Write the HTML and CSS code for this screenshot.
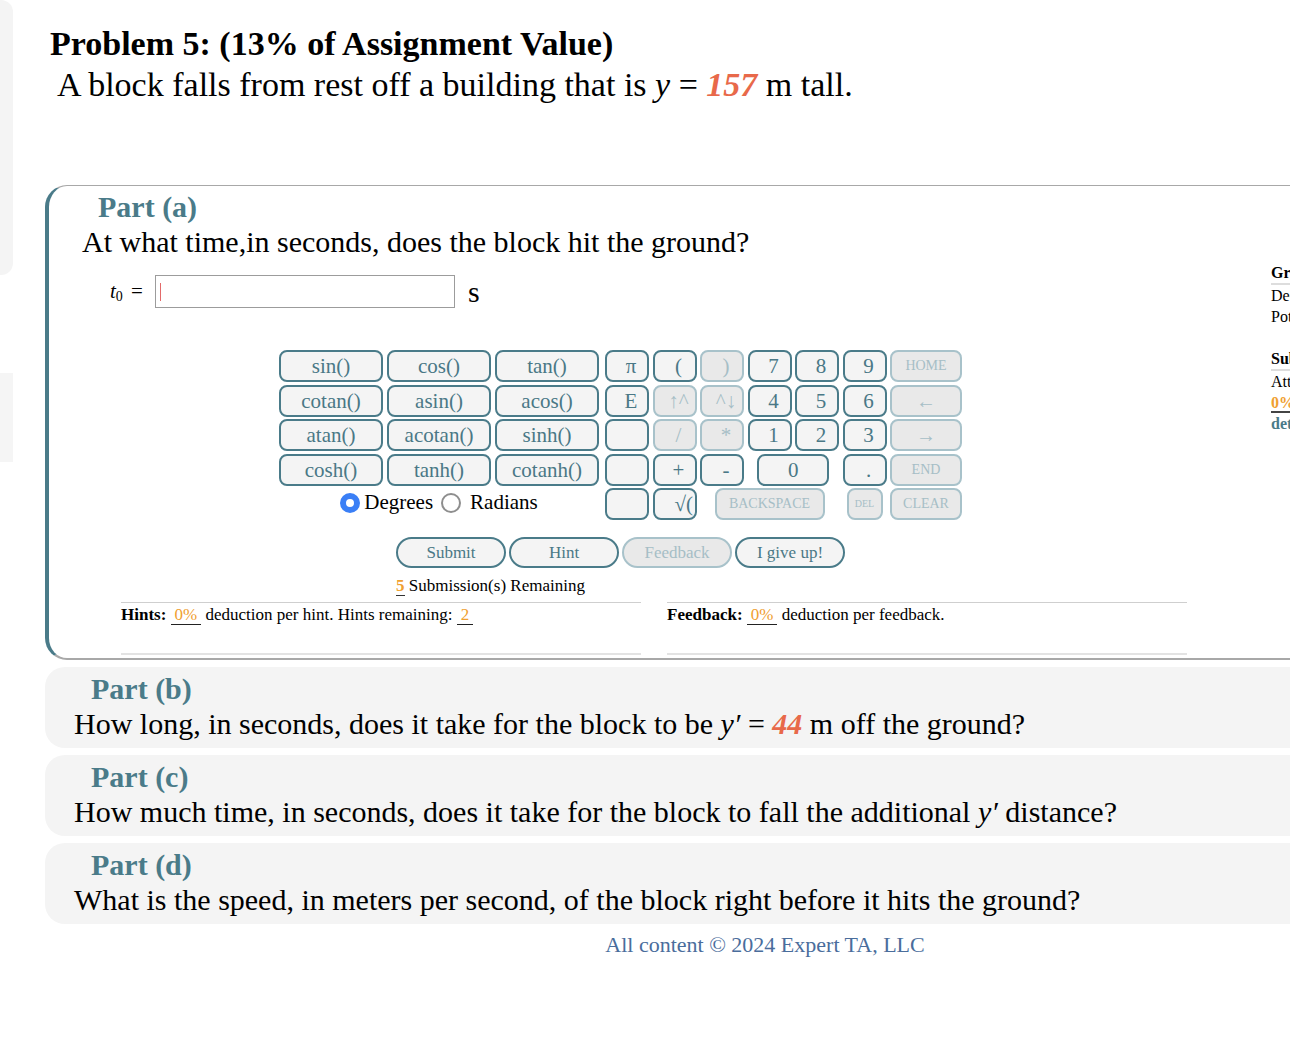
FILE: index.html
```html
<!DOCTYPE html>
<html lang="en">
<head>
<meta charset="utf-8">
<title>Problem 5</title>
<link rel="stylesheet" href="styles.css">
</head>
<body>
<div class="page">
  <aside class="rail">
    <div class="rail-top"></div>
    <div class="rail-mid"></div>
  </aside>
  <main class="content">
    <header class="problem">
      <h1 class="ptitle">Problem 5: (13% of Assignment Value)</h1>
      <p class="pintro">A block falls from rest off a building that is <span class="mi">y</span> = <span class="given">157</span> m tall.</p>
    </header>

    <section class="part part-a">
      <h2 class="part-title">Part (a)</h2>
      <p class="part-q">At what time,in seconds, does the block hit the ground?</p>
      <div class="part-body">
        <div class="work">
          <div class="answer-row">
            <span class="var"><span class="mi">t</span><sub class="sub">0</sub> <span class="eq">=</span></span>
            <div class="answer-box"><span class="caret"></span></div>
            <span class="unit">s</span>
          </div>

          <div class="keypad">
            <div class="fn-grid">
              <button class="key">sin()</button>
              <button class="key">cos()</button>
              <button class="key">tan()</button>
              <button class="key">cotan()</button>
              <button class="key">asin()</button>
              <button class="key">acos()</button>
              <button class="key">atan()</button>
              <button class="key">acotan()</button>
              <button class="key">sinh()</button>
              <button class="key">cosh()</button>
              <button class="key">tanh()</button>
              <button class="key">cotanh()</button>
              <div class="angle">
                <label class="opt"><input type="radio" name="ang" checked><span>Degrees</span></label>
                <label class="opt"><input type="radio" name="ang"><span>Radians</span></label>
              </div>
            </div>
            <div class="num-grid">
              <button class="key sm">π</button>
              <button class="key sm">(</button>
              <button class="key sm off">)</button>
              <button class="key sm">7</button>
              <button class="key sm">8</button>
              <button class="key sm">9</button>
              <button class="key off word">HOME</button>

              <button class="key sm">E</button>
              <button class="key sm off">↑^</button>
              <button class="key sm off">^↓</button>
              <button class="key sm">4</button>
              <button class="key sm">5</button>
              <button class="key sm">6</button>
              <button class="key off word arrow">←</button>

              <button class="key sm"></button>
              <button class="key sm off">/</button>
              <button class="key sm off">*</button>
              <button class="key sm">1</button>
              <button class="key sm">2</button>
              <button class="key sm">3</button>
              <button class="key off word arrow">→</button>

              <button class="key sm"></button>
              <button class="key sm">+</button>
              <button class="key sm">-</button>
              <button class="key zero">0</button>
              <button class="key sm">.</button>
              <button class="key off word">END</button>

              <button class="key sm"></button>
              <button class="key sm sqrt">√(</button>
              <button class="key off word back">BACKSPACE</button>
              <button class="key off del">DEL</button>
              <button class="key off word">CLEAR</button>
            </div>
          </div>

          <div class="actions">
            <div class="act-row">
              <button class="act">Submit</button>
              <button class="act">Hint</button>
              <button class="act off">Feedback</button>
              <button class="act">I give up!</button>
            </div>
            <div class="remaining"><span class="num-u">5</span> Submission(s) Remaining</div>
          </div>

          <div class="info">
            <div class="info-col"><b>Hints:</b> <span class="pct">0%</span> deduction per hint. Hints remaining: <span class="pct">2</span></div>
            <div class="info-col"><b>Feedback:</b> <span class="pct">0%</span> deduction per feedback.</div>
          </div>
        </div>

        <aside class="summary">
          <div class="sum-head">Grade Summary</div>
          <div class="sum-line">Deductions</div>
          <div class="sum-line">Potential</div>
          <div class="sum-head sum-gap">Submissions</div>
          <div class="sum-line">Attempts remaining: 5</div>
          <div class="sum-line"><span class="sum-pct">0% per attempt</span></div>
          <div class="sum-line sum-link">detailed view</div>
        </aside>
      </div>
    </section>

    <section class="part part-closed">
      <h2 class="part-title">Part (b)</h2>
      <p class="part-q">How long, in seconds, does it take for the block to be <span class="mi">y′</span> = <span class="given">44</span> m off the ground?</p>
    </section>
    <section class="part part-closed">
      <h2 class="part-title">Part (c)</h2>
      <p class="part-q">How much time, in seconds, does it take for the block to fall the additional <span class="mi">y′</span> distance?</p>
    </section>
    <section class="part part-closed">
      <h2 class="part-title">Part (d)</h2>
      <p class="part-q">What is the speed, in meters per second, of the block right before it hits the ground?</p>
    </section>

    <footer class="foot">All content © 2024 Expert TA, LLC</footer>
  </main>
</div>
</body>
</html>
```

FILE: styles.css
```css
html, body {
  margin: 0;
  padding: 0;
  overflow: hidden;
  background: #ffffff;
}
body {
  width: 1290px;
  height: 1062px;
  font-family: "Liberation Serif", "Times New Roman", serif;
  color: #000;
}
button { font-family: inherit; }

.page {
  display: flex;
  align-items: flex-start;
  width: 1500px;
}

/* left rail */
.rail { width: 13px; flex: none; }
.rail-top {
  height: 275px;
  background: #f4f4f4;
  border-radius: 0 12px 12px 0;
}
.rail-mid {
  height: 89px;
  margin-top: 98px;
  background: #f5f5f5;
}

.content {
  flex: none;
  width: 1440px;
  margin-left: 32px;
}

/* problem header */
.problem { padding-top: 24px; }
.ptitle {
  margin: 0;
  padding-left: 5px;
  font-size: 34px;
  line-height: 40px;
  font-weight: bold;
}
.pintro {
  margin: 1px 0 0;
  padding-left: 12px;
  font-size: 34px;
  line-height: 40px;
}
.mi { font-style: italic; }
.given {
  color: #e8694a;
  font-weight: bold;
  font-style: italic;
}

/* parts */
.part-title {
  margin: 0;
  font-size: 30px;
  line-height: 35px;
  font-weight: bold;
  color: #4a7b89;
}
.part-q {
  margin: 0;
  font-size: 30px;
  line-height: 35px;
}

.part-a {
  margin-top: 80px;
  border-left: 4px solid #4a7b89;
  border-top: 1px solid #a8a8a8;
  border-bottom: 2px solid #a8a8a8;
  border-radius: 22px 0 0 22px;
  padding: 3px 0 3px;
  background: #fff;
}
.part-a .part-title { padding-left: 49px; }
.part-a .part-q { padding-left: 33px; }

.part-closed {
  margin-top: 7px;
  background: #f4f4f4;
  border-radius: 20px 0 0 20px;
  padding: 4px 0 7px;
}
.part-closed .part-title { padding-left: 46px; }
.part-closed .part-q { padding-left: 29px; }

.part-body {
  display: flex;
  align-items: flex-start;
}
.work {
  flex: none;
  width: 1143px;
}

/* answer row */
.answer-row {
  display: flex;
  align-items: center;
  height: 33px;
  margin-top: 16px;
  padding-left: 61px;
}
.var {
  width: 45px;
  flex: none;
  font-size: 21px;
  line-height: 33px;
  white-space: nowrap;
}
.sub { font-size: 14px; vertical-align: -3px; line-height: 0; }
.eq { margin-left: 3px; }
.answer-box {
  box-sizing: border-box;
  width: 300px;
  height: 33px;
  border: 1px solid #9c9c9c;
  background: #fff;
  display: flex;
  align-items: center;
  padding-left: 4px;
}
.caret {
  width: 1px;
  height: 18px;
  background: #e36a6a;
}
.unit {
  margin-left: 13px;
  font-size: 30px;
  line-height: 33px;
}

/* keypad */
.keypad {
  display: flex;
  justify-content: center;
  gap: 6px;
  margin-top: 42px;
}
.fn-grid {
  display: grid;
  grid-template-columns: repeat(3, 104px);
  grid-auto-rows: 32px;
  column-gap: 4px;
  row-gap: 2.5px;
}
.num-grid {
  display: grid;
  grid-template-columns: repeat(6, 44px) 72px;
  grid-auto-rows: 32px;
  column-gap: 3.5px;
  row-gap: 2.5px;
}
.key {
  box-sizing: border-box;
  height: 32px;
  margin: 0;
  padding: 0;
  border: 2px solid #4a7b89;
  border-radius: 8px;
  background: #f4f4f4;
  color: #4a7886;
  font-size: 21px;
  line-height: 28px;
  white-space: nowrap;
  overflow: hidden;
}
.key.sm { padding-left: 8px; }
.key.off {
  background: #e9e9e9;
  border-color: #a8c2ca;
  color: #a6bec6;
}
.key.word { font-size: 14px; padding-left: 0; }
.key.arrow { font-size: 20px; }
.key.zero { grid-column: span 2; width: 72px; justify-self: center; }
.key.sqrt { padding-left: 20px; text-align: left; }
.key.back { grid-column: span 3; width: 110px; justify-self: center; }
.key.del {
  width: 36px;
  justify-self: center;
  font-size: 10px;
  padding: 0;
}

.angle {
  grid-column: 1 / -1;
  display: flex;
  align-items: center;
  justify-content: center;
  font-size: 21px;
  padding-bottom: 4px;
}
.opt {
  display: flex;
  align-items: center;
}
.opt + .opt { margin-left: 8px; }
.opt input {
  appearance: none;
  -webkit-appearance: none;
  box-sizing: border-box;
  width: 20px;
  height: 20px;
  margin: 2px 4px 0 0;
  border-radius: 50%;
  border: 2px solid #8e8e8e;
  background: #fff;
}
.opt + .opt input { margin-right: 9px; }
.opt input:checked {
  border: 6px solid #3a7ff6;
  background: #fff;
}

/* actions */
.actions {
  width: 449px;
  margin: 17px auto 0;
}
.act-row {
  display: flex;
  gap: 3px;
}
.act {
  box-sizing: border-box;
  width: 110px;
  height: 31px;
  margin: 0;
  padding: 0;
  border: 2px solid #4a7b89;
  border-radius: 16px;
  background: #f4f4f4;
  color: #4a7886;
  font-size: 17px;
}
.act.off {
  background: #e9e9e9;
  border-color: #a8c2ca;
  color: #a6bec6;
}
.remaining {
  margin-top: 8px;
  font-size: 17px;
  line-height: 20px;
}
.num-u {
  color: #f0a030;
  font-weight: bold;
  border-bottom: 1px solid #333;
}

/* info */
.info {
  display: flex;
  gap: 26px;
  margin: 6px 0 0 72px;
}
.info-col {
  box-sizing: border-box;
  width: 520px;
  height: 53px;
  border-top: 1px solid #cfcfcf;
  border-bottom: 2px solid #e3e3e3;
  padding-top: 2px;
  font-size: 17px;
  line-height: 20px;
}
.pct {
  color: #f0a030;
  padding: 0 4px;
  border-bottom: 1px solid #222;
}

/* summary */
.summary {
  flex: none;
  width: 200px;
  margin-left: 79px;
  padding-top: 4px;
  font-size: 16px;
  white-space: nowrap;
}
.sum-head {
  font-weight: bold;
  line-height: 20px;
  border-bottom: 2px solid #dddddd;
}
.sum-gap { margin-top: 22px; }
.sum-line { line-height: 21px; }
.sum-pct {
  color: #f0a030;
  font-weight: bold;
  border-bottom: 2px solid #444;
  padding-right: 20px;
}
.sum-link {
  color: #4a7b89;
  font-weight: bold;
}

/* footer */
.foot {
  margin-top: 8px;
  text-align: center;
  font-size: 22px;
  line-height: 26px;
  color: #4a6d9c;
}
```
